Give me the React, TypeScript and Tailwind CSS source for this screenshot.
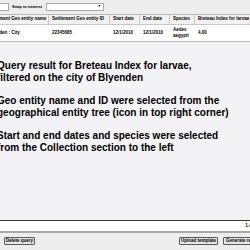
const headers = [
  'Settlement Geo entity name',
  'Settlement Geo entity ID',
  'Start date',
  'End date',
  'Species',
  'Breteau Index for larvae',
];

const cols = 'grid grid-cols-[65px_61px_30px_30px_25px_80px]';

const notes = [
  ['Query result for Breteau Index for larvae,', 'filtered on the city of Blyenden'],
  ['Geo entity name and ID were selected from the', 'geographical entity tree (icon in top right corner)'],
  ['Start and end dates and species were selected', 'from the Collection section to the left'],
];

const btn =
  'h-[8px] shrink-0 bg-[#e6e6e6] border border-[#5a5a5a] rounded-[1px] text-[4.5px] font-bold leading-none flex items-center justify-center whitespace-nowrap';

export default function App() {
  return (
    <div className="w-[250px] h-[250px] overflow-hidden flex flex-col bg-[#f3f3f5] text-black font-['Liberation_Sans',Arial,sans-serif]">
      <div className="h-[14px] shrink-0 bg-[#ededed] flex items-center">
        <div className="w-[9px] h-[8px] bg-white border border-l-0 border-[#a8a8a8]" />
        <span className="ml-[3px] text-[4px] font-bold leading-none whitespace-nowrap">Snap to nearest</span>
        <div className="ml-[4px] w-[58px] h-[8px] bg-white border border-[#a8a8a8] flex items-center justify-end pr-[2px]">
          <span className="text-[3.5px] leading-none">▼</span>
        </div>
      </div>

      <div className="shrink-0 -ml-[16px] w-[266px] bg-white border-t border-b border-[#b8b8b8]">
        <div className={`${cols} h-[10px] bg-[#f1f1f1] border-b border-[#c8c8c8] text-[4.5px] font-bold`}>
          {headers.map((h) => (
            <div key={h} className="px-[3px] border-r border-[#c8c8c8] flex items-center whitespace-nowrap overflow-hidden">
              {h}
            </div>
          ))}
        </div>
        <div className={`${cols} h-[16px] text-[4.5px] font-bold`}>
          <div className="px-[3px] flex items-center whitespace-nowrap">Blyenden : City</div>
          <div className="px-[3px] flex items-center">22345685</div>
          <div className="px-[3px] flex items-center">12/1/2010</div>
          <div className="px-[3px] flex items-center">12/1/2010</div>
          <div className="px-[3px] flex items-center leading-[6px]">Aedes<br />aegypti</div>
          <div className="px-[3px] flex items-center">4.00</div>
        </div>
      </div>

      <div className="flex-1 -ml-[3px] pt-[18px] flex flex-col gap-[11px] text-[10px] leading-[12px] font-bold">
        {notes.map((p) => (
          <p key={p[0]} className="whitespace-nowrap">
            {p[0]}
            <br />
            {p[1]}
          </p>
        ))}
      </div>

      <div className="shrink-0 h-[1px] bg-[#3a3a3a]" />
      <div className="shrink-0 h-[10px] bg-white flex items-center justify-end -mr-[4px] text-[4.5px] font-bold">1.40</div>
      <div className="shrink-0 h-[2px] bg-[#a9a9a9]" />
      <div className="shrink-0 h-[17px] bg-[#ededed] flex items-start pt-[4px] pl-[4px]">
        <div className={`${btn} w-[31px]`}>Delete query</div>
        <div className={`${btn} w-[39px] ml-auto`}>Upload template</div>
        <div className={`${btn} w-[40px] ml-[5px] -mr-[13px]`}>Generate report</div>
      </div>
    </div>
  );
}
